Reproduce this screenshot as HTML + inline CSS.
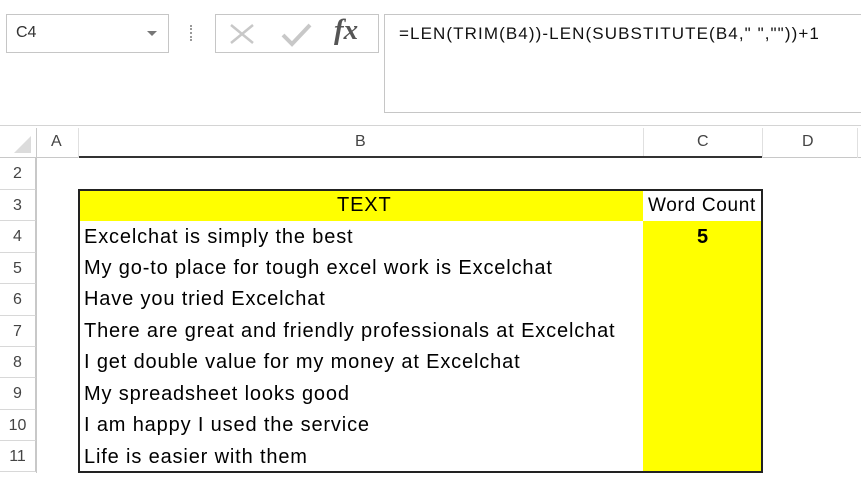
<!DOCTYPE html>
<html><head><style>
body{margin:0;width:861px;height:480px;background:#fff;position:relative;overflow:hidden;font-family:"Liberation Sans",sans-serif;}
.a{position:absolute;box-sizing:border-box;}
.t{font-size:20px;letter-spacing:0.85px;color:#000;white-space:nowrap;}
.rh{left:0;width:36px;text-align:center;color:#444;font-size:16px;border-bottom:1px solid #d8d8d8;border-right:1px solid #c8c8c8;background:#fff;}
</style></head><body>
<div class="a" style="left:6px;top:14px;width:163px;height:39px;border:1px solid #c6c6c6;"></div>
<div class="a" style="left:16px;top:24px;font-size:16px;color:#333;">C4</div>
<div class="a" style="left:147px;top:31px;width:0;height:0;border-left:5px solid transparent;border-right:5px solid transparent;border-top:5px solid #777;"></div>
<div class="a" style="left:190px;top:25px;width:2px;height:16px;border-left:2px dotted #999;"></div>
<div class="a" style="left:215px;top:14px;width:164px;height:39px;border:1px solid #c6c6c6;"></div>
<svg class="a" style="left:228px;top:22px" width="30" height="24"><path d="M3 3L25 21M25 3L3 21" stroke="#c8c8c8" stroke-width="2.5"/></svg>
<svg class="a" style="left:280px;top:22px" width="34" height="26"><path d="M3 13L12 22L30 3" stroke="#c8c8c8" stroke-width="4" fill="none"/></svg>
<div class="a" style="left:334px;top:14px;font-family:'Liberation Serif',serif;font-style:italic;font-weight:bold;font-size:29px;color:#555;">fx</div>
<div class="a" style="left:384px;top:14px;width:480px;height:99px;border:1px solid #c6c6c6;"></div>
<div class="a" style="left:399px;top:24px;font-size:17px;letter-spacing:1.1px;color:#111;white-space:nowrap;">=LEN(TRIM(B4))-LEN(SUBSTITUTE(B4," ",""))+1</div>
<div class="a" style="left:0;top:125px;width:861px;height:1px;background:#d4d4d4;"></div>
<div class="a" style="left:0;top:128px;width:861px;height:30px;border-bottom:1px solid #c8c8c8;"></div>
<svg class="a" style="left:12px;top:134px" width="20" height="20"><path d="M19 2L19 19L2 19Z" fill="#dcdcdc"/></svg>
<div class="a" style="left:36px;top:128px;width:1px;height:345px;background:#c8c8c8;"></div>
<div class="a" style="left:78px;top:128px;width:1px;height:30px;background:#e0e0e0;"></div>
<div class="a" style="left:643px;top:128px;width:1px;height:30px;background:#e0e0e0;"></div>
<div class="a" style="left:762px;top:128px;width:1px;height:30px;background:#e0e0e0;"></div>
<div class="a" style="left:857px;top:128px;width:1px;height:30px;background:#e0e0e0;"></div>
<div class="a" style="left:79px;top:156px;width:683px;height:2px;background:#333;"></div>
<div class="a" style="left:51px;top:133px;font-size:16px;color:#444;">A</div>
<div class="a" style="left:355px;top:133px;font-size:16px;color:#444;">B</div>
<div class="a" style="left:697px;top:133px;font-size:16px;color:#444;">C</div>
<div class="a" style="left:802px;top:133px;font-size:16px;color:#444;">D</div>
<div class="a rh" style="top:158px;height:32px;line-height:32px;">2</div>
<div class="a rh" style="top:190px;height:31px;line-height:31px;">3</div>
<div class="a rh" style="top:221px;height:32px;line-height:32px;">4</div>
<div class="a rh" style="top:253px;height:31px;line-height:31px;">5</div>
<div class="a rh" style="top:284px;height:32px;line-height:32px;">6</div>
<div class="a rh" style="top:316px;height:31px;line-height:31px;">7</div>
<div class="a rh" style="top:347px;height:31px;line-height:31px;">8</div>
<div class="a rh" style="top:378px;height:32px;line-height:32px;">9</div>
<div class="a rh" style="top:410px;height:31px;line-height:31px;">10</div>
<div class="a rh" style="top:441px;height:31px;line-height:31px;">11</div>
<div class="a" style="left:78px;top:189px;width:685px;height:284px;border:2px solid #222;"></div>
<div class="a" style="left:80px;top:191px;width:563px;height:30px;background:#ffff00;"></div>
<div class="a" style="left:643px;top:221px;width:118px;height:250px;background:#ffff00;"></div>
<div class="a t" style="left:337px;top:194px;">TEXT</div>
<div class="a t" style="left:648px;top:195px;font-size:19px;letter-spacing:0.7px;">Word Count</div>
<div class="a t" style="left:697px;top:226px;font-weight:bold;">5</div>
<div class="a t" style="left:84px;top:226px;">Excelchat is simply the best</div>
<div class="a t" style="left:84px;top:257px;">My go-to place for tough excel work is Excelchat</div>
<div class="a t" style="left:84px;top:288px;">Have you tried Excelchat</div>
<div class="a t" style="left:84px;top:320px;">There are great and friendly professionals at Excelchat</div>
<div class="a t" style="left:84px;top:351px;">I get double value for my money at Excelchat</div>
<div class="a t" style="left:84px;top:383px;">My spreadsheet looks good</div>
<div class="a t" style="left:84px;top:414px;">I am happy I used the service</div>
<div class="a t" style="left:84px;top:446px;">Life is easier with them</div>
</body></html>
